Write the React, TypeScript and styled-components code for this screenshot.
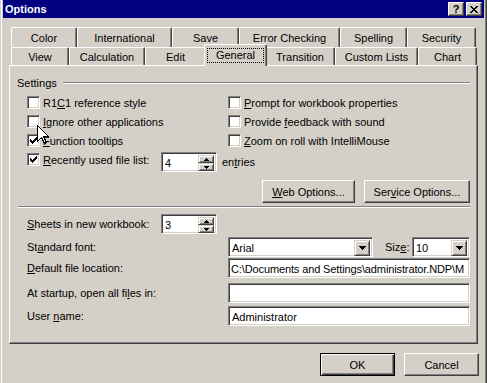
import React from 'react';
import styled, { createGlobalStyle } from 'styled-components';

const face = '#d4d0c8';
const shadow = '#808080';
const dark = '#404040';

const GlobalStyle = createGlobalStyle`
  html, body {
    margin: 0;
    padding: 0;
    background: ${face};
  }
  body {
    font-family: "Liberation Sans", Arial, sans-serif;
    font-size: 11px;
    color: #000;
  }
  * {
    box-sizing: border-box;
  }
  u {
    text-underline-offset: 1px;
  }
`;

const Window = styled.div`
  position: relative;
  width: 487px;
  height: 383px;
  background: ${face};
  border-left: 1px solid ${face};
  border-right: 1px solid ${dark};
  box-shadow: inset 1px 0 #fff, inset -1px 0 ${shadow};
  padding: 0 2px;
  display: flex;
  flex-direction: column;
  overflow: hidden;
`;

const TitleBar = styled.div`
  height: 18px;
  flex: none;
  background: #000080;
  display: flex;
  align-items: center;
  padding: 0 2px;
`;

const TitleText = styled.div`
  flex: 1;
  color: #fff;
  font-weight: bold;
  font-size: 11px;
`;

const CaptionButtons = styled.div`
  display: flex;
  gap: 2px;
`;

const CaptionButton = styled.div`
  width: 16px;
  height: 14px;
  background: ${face};
  border: 1px solid;
  border-color: #fff ${dark} ${dark} #fff;
  box-shadow: inset -1px -1px ${shadow};
  display: flex;
  align-items: center;
  justify-content: center;
  font-weight: bold;
  font-size: 11px;
  line-height: 12px;
`;

const Body = styled.div`
  display: flex;
  flex-direction: column;
  padding: 0 5px 0 6px;
`;

const TabStrip = styled.div`
  margin-top: 9px;
  padding-left: 2px;
  display: flex;
  flex-direction: column;
`;

const TabRow = styled.div<{ $h: number }>`
  display: flex;
  align-items: flex-start;
  height: ${p => p.$h}px;
`;

const Tab = styled.div<{ $w: number; $h: number; $active?: boolean }>`
  position: relative;
  z-index: ${p => (p.$active ? 2 : 1)};
  flex: none;
  width: ${p => p.$w + (p.$active ? 4 : 0)}px;
  height: ${p => p.$h + (p.$active ? 4 : 0)}px;
  margin: ${p => (p.$active ? '-3px -2px 0' : '0')};
  background: ${face};
  border-top: 1px solid #fff;
  border-left: 1px solid #fff;
  border-right: 1px solid ${dark};
  border-radius: 2px 2px 0 0;
  box-shadow: inset -1px 0 ${shadow};
  display: flex;
  align-items: center;
  justify-content: center;
  white-space: nowrap;
`;

const FocusLabel = styled.span`
  border: 1px dotted #000;
  padding: 0 8px;
  height: 15px;
  line-height: 13px;
  margin-bottom: 1px;
`;

const Panel = styled.div`
  width: 469px;
  height: 279px;
  flex: none;
  border-top: 1px solid #fff;
  border-left: 1px solid #fff;
  border-right: 1px solid ${dark};
  border-bottom: 1px solid ${dark};
  box-shadow: inset -1px -1px ${shadow};
  padding: 0 7px;
  display: flex;
  flex-direction: column;
`;

const SectionHeader = styled.div`
  margin-top: 10px;
  height: 14px;
  display: flex;
  align-items: center;
`;

const EtchedLine = styled.div<{ $ml?: number }>`
  flex: 1;
  height: 2px;
  margin-left: ${p => p.$ml ?? 0}px;
  border-top: 1px solid ${shadow};
  border-bottom: 1px solid #fff;
`;

const Separator = styled(EtchedLine)`
  flex: none;
  margin-top: 3px;
`;

const CheckGrid = styled.div`
  margin-top: 3px;
  padding-left: 10px;
  display: grid;
  grid-template-columns: 201px 1fr;
  grid-auto-rows: 19px;
`;

const CheckItem = styled.div<{ $w?: number }>`
  display: flex;
  align-items: center;
  gap: 3px;
  height: 19px;
  white-space: nowrap;
  ${p => (p.$w ? `width: ${p.$w}px; flex: none; align-self: flex-start;` : '')}
`;

const Box = styled.div`
  width: 13px;
  height: 13px;
  flex: none;
  background: #fff;
  border: 1px solid;
  border-color: ${shadow} #fff #fff ${shadow};
  box-shadow: inset 1px 1px ${dark}, inset -1px -1px ${face};
  padding: 2px 0 0 2px;
  svg {
    display: block;
  }
`;

const RecentRow = styled.div`
  height: 24px;
  padding-left: 10px;
  display: flex;
  align-items: center;
`;

const Suffix = styled.span`
  margin-left: 5px;
`;

const ButtonRow = styled.div`
  margin-top: 6px;
  display: flex;
  justify-content: flex-end;
  gap: 9px;
`;

const PushButton = styled.div<{ $w: number; $default?: boolean }>`
  width: ${p => p.$w}px;
  height: 23px;
  flex: none;
  background: ${face};
  display: flex;
  align-items: center;
  justify-content: center;
  white-space: nowrap;
  ${p =>
    p.$default
      ? `border: 1px solid #000; box-shadow: inset 1px 1px #fff, inset -1px -1px ${dark}, inset -2px -2px ${shadow};`
      : `border: 1px solid; border-color: #fff ${dark} ${dark} #fff; box-shadow: inset -1px -1px ${shadow};`}
`;

const FormRow = styled.div<{ $mt: number }>`
  margin-top: ${p => p.$mt}px;
  height: 20px;
  padding-left: 10px;
  display: flex;
  align-items: center;
`;

const FormLabel = styled.div<{ $w: number; $ml?: number }>`
  width: ${p => p.$w}px;
  margin-left: ${p => p.$ml ?? 0}px;
  flex: none;
  white-space: nowrap;
`;

const Field = styled.div<{ $w: number }>`
  width: ${p => p.$w}px;
  height: 20px;
  flex: none;
  background: #fff;
  border: 1px solid;
  border-color: ${shadow} #fff #fff ${shadow};
  box-shadow: inset 1px 1px ${dark}, inset -1px -1px ${face};
  padding: 2px;
  display: flex;
  align-items: stretch;
  overflow: hidden;
`;

const FieldText = styled.div<{ $tight?: boolean }>`
  flex: 1;
  padding-left: ${p => (p.$tight ? 0 : 1)}px;
  letter-spacing: ${p => (p.$tight ? '-0.12px' : 'normal')};
  line-height: 16px;
  white-space: nowrap;
  overflow: hidden;
`;

const SpinColumn = styled.div`
  width: 16px;
  flex: none;
  display: flex;
  flex-direction: column;
`;

const SmallButton = styled.div<{ $h: number }>`
  height: ${p => p.$h}px;
  width: 16px;
  flex: none;
  background: ${face};
  border: 1px solid;
  border-color: ${face} ${dark} ${dark} ${face};
  box-shadow: inset 1px 1px #fff, inset -1px -1px ${shadow};
  display: flex;
  align-items: center;
  justify-content: center;
  svg {
    display: block;
  }
`;

const Footer = styled.div`
  margin-top: 9px;
  display: flex;
  justify-content: flex-end;
  gap: 9px;
`;

const Cursor = styled.svg`
  position: absolute;
  left: 36px;
  top: 125px;
  z-index: 5;
`;

const Check = ({ checked }: { checked?: boolean }) => (
  <Box>
    {checked && (
      <svg width="7" height="7" viewBox="0 0 7 7" shapeRendering="crispEdges">
        {[2, 3, 4, 3, 2, 1, 0].map((y, x) => (
          <rect key={x} x={x} y={y} width="1" height="3" fill="#000" />
        ))}
      </svg>
    )}
  </Box>
);

const Arrow = ({ up, size }: { up?: boolean; size: number }) => {
  const rows = Array.from({ length: Math.ceil(size / 2) }, (_, i) => i);
  const h = rows.length;
  return (
    <svg width={size} height={h} viewBox={`0 0 ${size} ${h}`} shapeRendering="crispEdges">
      {rows.map(i => {
        const w = up ? 1 + i * 2 : size - i * 2;
        return <rect key={i} x={(size - w) / 2} y={i} width={w} height="1" fill="#000" />;
      })}
    </svg>
  );
};

const CloseGlyph = () => {
  const rows = ['11000011', '01100110', '00111100', '00011000', '00111100', '01100110', '11000011'];
  return (
    <svg width="8" height="7" viewBox="0 0 8 7" shapeRendering="crispEdges">
      {rows.map((r, y) =>
        r.split('').map((c, x) => (c === '1' ? <rect key={`${x}-${y}`} x={x} y={y} width="1" height="1" fill="#000" /> : null))
      )}
    </svg>
  );
};

const Spinner = ({ value }: { value: string }) => (
  <Field $w={56}>
    <FieldText>{value}</FieldText>
    <SpinColumn>
      <SmallButton $h={8}>
        <Arrow up size={5} />
      </SmallButton>
      <SmallButton $h={8}>
        <Arrow size={5} />
      </SmallButton>
    </SpinColumn>
  </Field>
);

const Combo = ({ value, w }: { value: string; w: number }) => (
  <Field $w={w}>
    <FieldText>{value}</FieldText>
    <SmallButton $h={16}>
      <Arrow size={7} />
    </SmallButton>
  </Field>
);

const topTabs: [string, number][] = [
  ['Color', 66],
  ['International', 95],
  ['Save', 67],
  ['Error Checking', 101],
  ['Spelling', 67],
  ['Security', 69],
];

const bottomTabs: [string, number][] = [
  ['View', 58],
  ['Calculation', 76],
  ['Edit', 61],
  ['General', 59],
  ['Transition', 70],
  ['Custom Lists', 83],
  ['Chart', 59],
];

export default function App() {
  return (
    <>
      <GlobalStyle />
      <Window>
        <TitleBar>
          <TitleText>Options</TitleText>
          <CaptionButtons>
            <CaptionButton>?</CaptionButton>
            <CaptionButton>
              <CloseGlyph />
            </CaptionButton>
          </CaptionButtons>
        </TitleBar>

        <Body>
          <TabStrip>
            <TabRow $h={20}>
              {topTabs.map(([label, w]) => (
                <Tab key={label} $w={w} $h={20}>
                  {label}
                </Tab>
              ))}
            </TabRow>
            <TabRow $h={18}>
              {bottomTabs.map(([label, w]) =>
                label === 'General' ? (
                  <Tab key={label} $w={w} $h={18} $active>
                    <FocusLabel>{label}</FocusLabel>
                  </Tab>
                ) : (
                  <Tab key={label} $w={w} $h={18}>
                    {label}
                  </Tab>
                )
              )}
            </TabRow>
          </TabStrip>

          <Panel>
            <SectionHeader>
              <span>Settings</span>
              <EtchedLine $ml={6} />
            </SectionHeader>

            <CheckGrid>
              <CheckItem>
                <Check />
                <span>R1<u>C</u>1 reference style</span>
              </CheckItem>
              <CheckItem>
                <Check />
                <span><u>P</u>rompt for workbook properties</span>
              </CheckItem>
              <CheckItem>
                <Check />
                <span><u>I</u>gnore other applications</span>
              </CheckItem>
              <CheckItem>
                <Check />
                <span>Provide <u>f</u>eedback with sound</span>
              </CheckItem>
              <CheckItem>
                <Check checked />
                <span><u>F</u>unction tooltips</span>
              </CheckItem>
              <CheckItem>
                <Check />
                <span><u>Z</u>oom on roll with IntelliMouse</span>
              </CheckItem>
            </CheckGrid>

            <RecentRow>
              <CheckItem $w={134}>
                <Check checked />
                <span><u>R</u>ecently used file list:</span>
              </CheckItem>
              <Spinner value="4" />
              <Suffix>en<u>t</u>ries</Suffix>
            </RecentRow>

            <ButtonRow>
              <PushButton $w={93}><span><u>W</u>eb Options...</span></PushButton>
              <PushButton $w={106}><span>Ser<u>v</u>ice Options...</span></PushButton>
            </ButtonRow>

            <Separator $ml={1} />

            <FormRow $mt={6}>
              <FormLabel $w={134}><u>S</u>heets in new workbook:</FormLabel>
              <Spinner value="3" />
            </FormRow>

            <FormRow $mt={3}>
              <FormLabel $w={201}>St<u>a</u>ndard font:</FormLabel>
              <Combo value="Arial" w={145} />
              <FormLabel $w={27} $ml={12}>Siz<u>e</u>:</FormLabel>
              <Combo value="10" w={58} />
            </FormRow>

            <FormRow $mt={1}>
              <FormLabel $w={201}><u>D</u>efault file location:</FormLabel>
              <Field $w={242}>
                <FieldText $tight>C:\Documents and Settings\administrator.NDP\M</FieldText>
              </Field>
            </FormRow>

            <FormRow $mt={5}>
              <FormLabel $w={201}>At startup, open all fi<u>l</u>es in:</FormLabel>
              <Field $w={242}>
                <FieldText />
              </Field>
            </FormRow>

            <FormRow $mt={3}>
              <FormLabel $w={201}>User <u>n</u>ame:</FormLabel>
              <Field $w={242}>
                <FieldText>Administrator</FieldText>
              </Field>
            </FormRow>
          </Panel>

          <Footer>
            <PushButton $w={75} $default>OK</PushButton>
            <PushButton $w={75}>Cancel</PushButton>
          </Footer>
        </Body>

        <Cursor width="13" height="20" viewBox="0 0 13 20" shapeRendering="crispEdges">
          <path
            d="M0.5 0.5 V16.5 L4.5 12.5 L7.5 18.5 L9.5 17.5 L6.5 11.5 H11.5 Z"
            fill="#fff"
            stroke="#000"
            strokeWidth="1"
          />
        </Cursor>
      </Window>
    </>
  );
}
